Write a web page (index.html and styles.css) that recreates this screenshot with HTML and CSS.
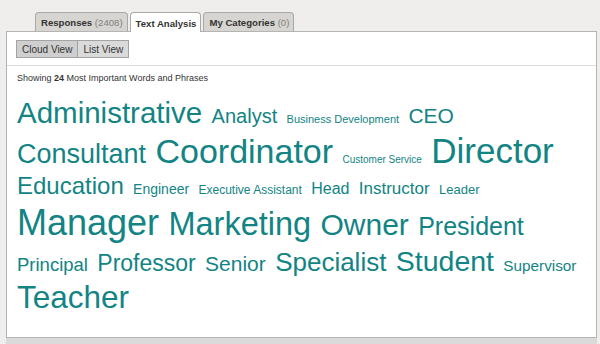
FILE: index.html
```html
<!DOCTYPE html>
<html>
<head>
<meta charset="utf-8">
<link rel="stylesheet" href="styles.css">
</head>
<body>
<div class="page">
  <div class="tabs">
    <div class="tab">Responses <span class="count">(2408)</span></div>
    <div class="tab active">Text Analysis</div>
    <div class="tab">My Categories <span class="count">(0)</span></div>
  </div>
  <div class="panel">
    <div class="toolbar">
      <div class="btn-group">
        <button class="btn pressed">Cloud View</button><button class="btn">List View</button>
      </div>
    </div>
    <div class="content">
      <div class="summary">Showing <b>24</b> Most Important Words and Phrases</div>
      <div class="cloud">
        <span class="w s29">Administrative</span>
        <span class="w s20">Analyst</span>
        <span class="w s11">Business Development</span>
        <span class="w s21">CEO</span>
        <span class="w s27">Consultant</span>
        <span class="w s34">Coordinator</span>
        <span class="w s10">Customer Service</span>
        <span class="w s35">Director</span>
        <span class="w s24">Education</span>
        <span class="w s14">Engineer</span>
        <span class="w s12">Executive Assistant</span>
        <span class="w s16">Head</span>
        <span class="w s17">Instructor</span>
        <span class="w s13">Leader</span>
        <span class="w s36">Manager</span>
        <span class="w s32">Marketing</span>
        <span class="w s30">Owner</span>
        <span class="w s25">President</span>
        <span class="w s18">Principal</span>
        <span class="w s23">Professor</span>
        <span class="w s21">Senior</span>
        <span class="w s26">Specialist</span>
        <span class="w s28">Student</span>
        <span class="w s15">Supervisor</span>
        <span class="w s31">Teacher</span>
      </div>
    </div>
  </div>
  <div class="footer"></div>
</div>
</body>
</html>
```
FILE: styles.css
```css
html, body {
  margin: 0;
  padding: 0;
}
body {
  background: #efeeec;
  font-family: "Liberation Sans", Arial, Helvetica, sans-serif;
  color: #333;
  width: 600px;
  height: 344px;
  overflow: hidden;
}
.page {
  padding: 12px 0 0 6px;
  width: 591px;
}
.tabs {
  display: flex;
  align-items: flex-end;
  gap: 2px;
  padding-left: 29px;
  height: 19px;
  position: relative;
  z-index: 1;
}
.tab {
  box-sizing: border-box;
  height: 19px;
  padding: 4px 4px 0 5px;
  border: 1px solid #a8a8a6;
  border-bottom: none;
  border-radius: 4px 4px 0 0;
  background: #d6d5d1;
  font-size: 9.6px;
  font-weight: bold;
  color: #333;
  white-space: nowrap;
}
.tab .count {
  font-weight: normal;
  color: #808080;
}
.tab.active {
  background: #fff;
  height: 20px;
  margin-bottom: -1px;
  padding-top: 5px;
}
.panel {
  box-sizing: border-box;
  height: 307px;
  background: #fff;
  border: 1px solid #b4b4b4;
}
.toolbar {
  padding: 8px 9px 7px;
  border-bottom: 1px solid #dcdcdc;
}
.btn-group {
  display: flex;
}
.btn {
  font-family: "Liberation Sans", Arial, Helvetica, sans-serif;
  font-size: 10px;
  color: #333;
  height: 18px;
  padding: 0 5px;
  margin: 0;
  background: #d6d6d6;
  border: 1px solid #a3a3a3;
  border-radius: 0;
}
.btn + .btn {
  border-left: none;
  background: #dadada;
}
.btn.pressed {
  background: #cfcfcf;
}
.content {
  padding: 7px 10px 0;
}
.summary {
  font-size: 9px;
  color: #333;
}
.cloud {
  margin-top: 12px;
  font-size: 12px;
  line-height: 1.2;
  color: #128484;
}
.w {
  margin-right: 6px;
}
.s10 { font-size: 10px; }
.s11 { font-size: 11px; }
.s12 { font-size: 12px; }
.s13 { font-size: 13px; }
.s14 { font-size: 14px; }
.s15 { font-size: 15.3px; }
.s16 { font-size: 16px; }
.s17 { font-size: 17px; }
.s18 { font-size: 18.5px; }
.s20 { font-size: 20px; }
.s21 { font-size: 21px; }
.s23 { font-size: 23px; }
.s24 { font-size: 24px; }
.s25 { font-size: 25px; }
.s26 { font-size: 26px; }
.s27 { font-size: 27px; }
.s28 { font-size: 28.5px; }
.s29 { font-size: 29.5px; }
.s30 { font-size: 30px; }
.s31 { font-size: 31.5px; }
.s32 { font-size: 32.5px; }
.s34 { font-size: 34px; }
.s35 { font-size: 35px; }
.s36 { font-size: 36px; }
.footer {
  height: 8px;
  background: #dadada;
}
```
